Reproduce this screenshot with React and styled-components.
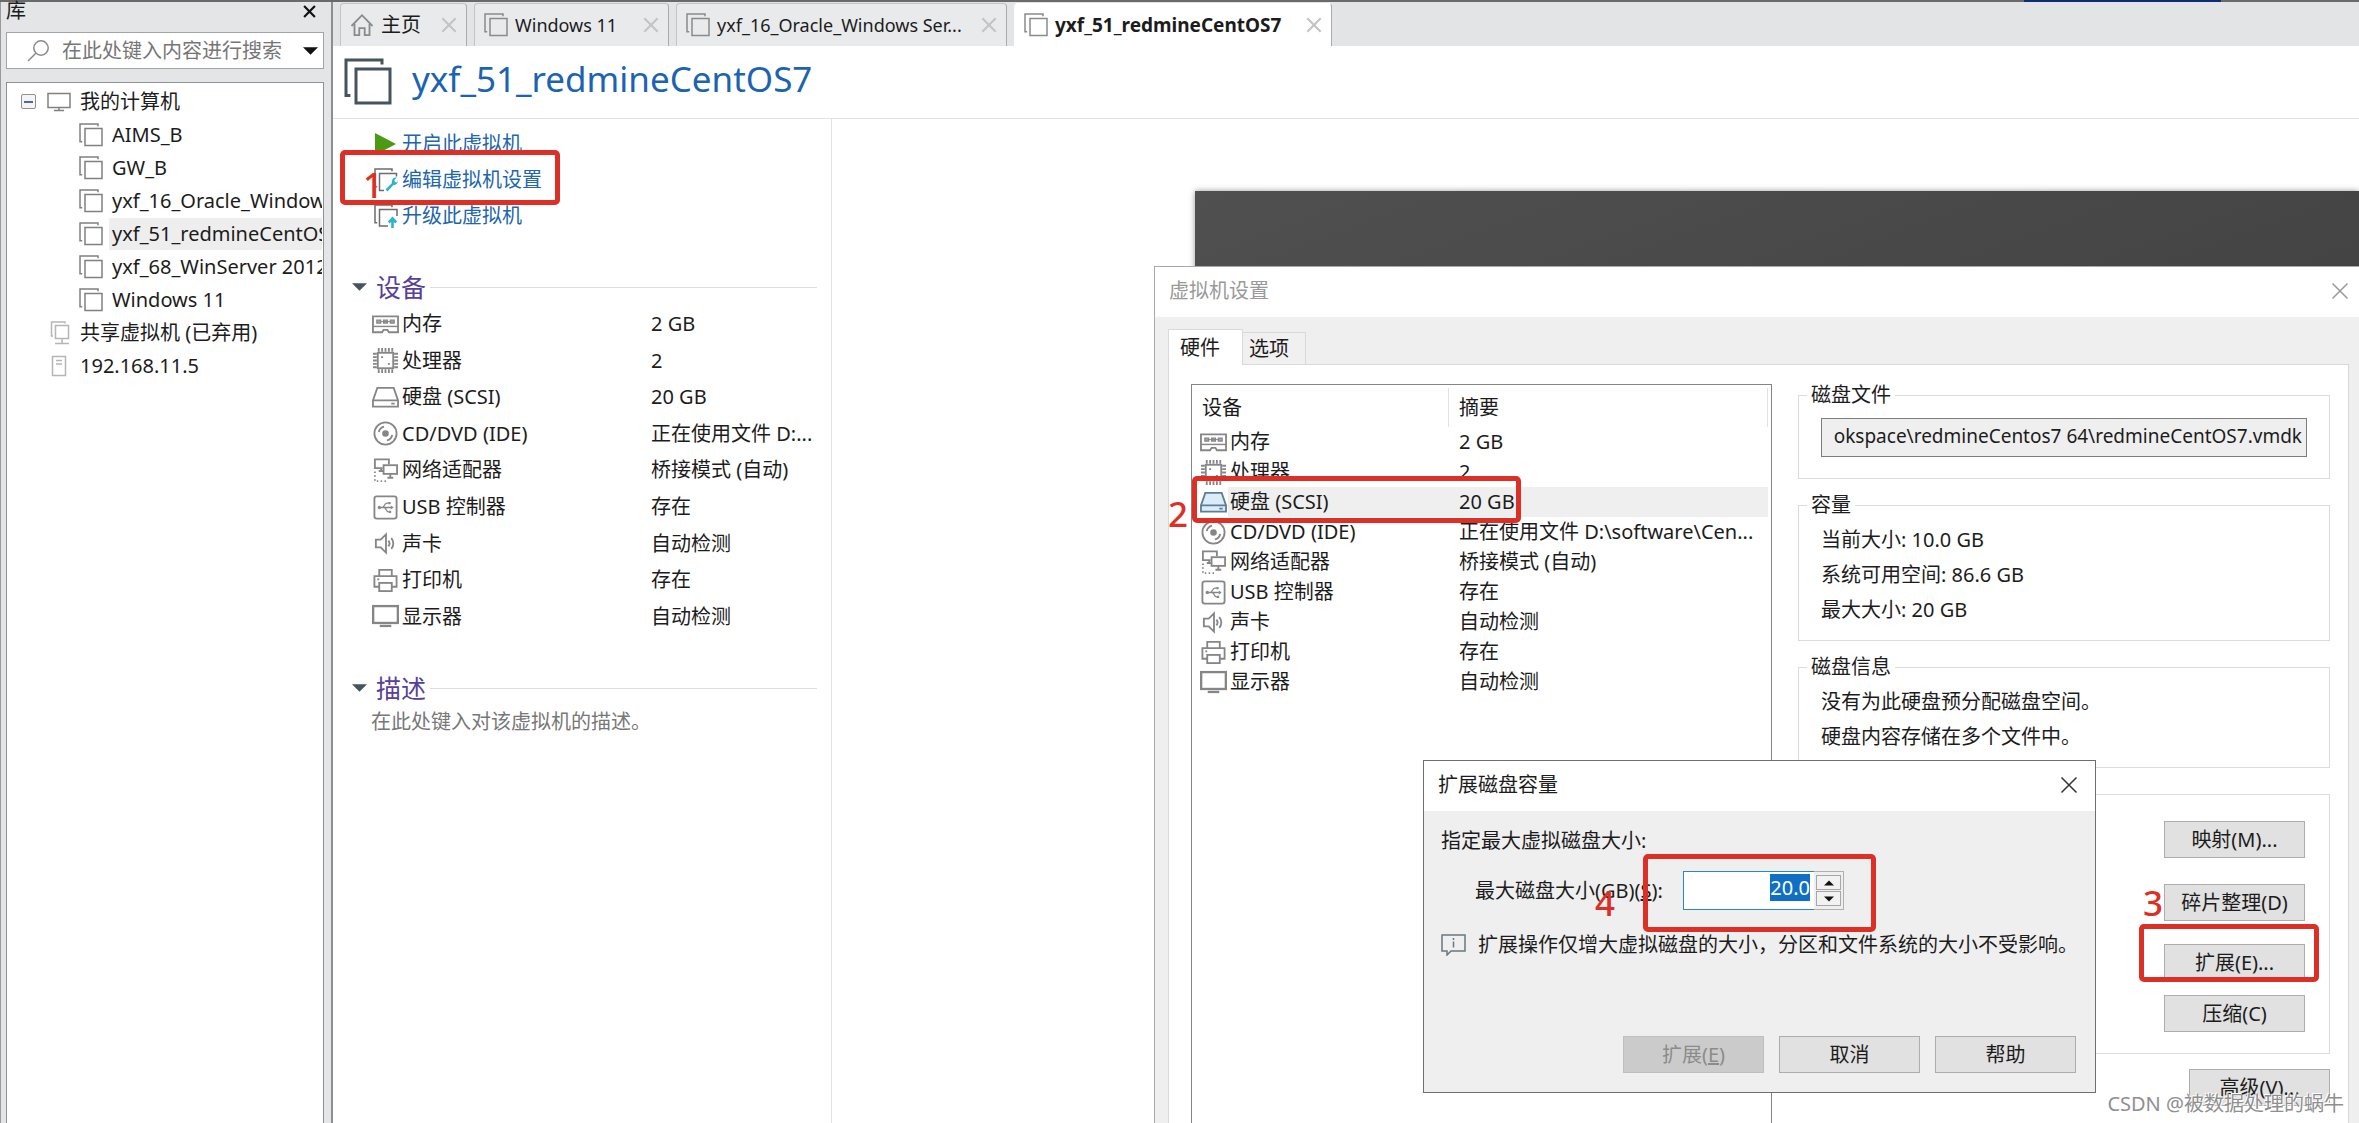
import React, { useEffect, useRef } from 'react';
import styled, { createGlobalStyle } from 'styled-components';

const GlobalStyle = createGlobalStyle`
  * {
    box-sizing: border-box;
  }

  body {
    margin: 0;
    background: #fff;
    color: #1c1c1c;
    font-family: "Noto Sans", "Noto Sans CJK SC", sans-serif;
    font-size: 20px;
    line-height: 30px;
  }

  button, input {
    font: inherit;
    color: inherit;
    border-radius: 0;
  }

  svg {
    display: block;
    flex: none;
  }
`;

/* ---------- icons ---------- */

const Icon = ({ size = 24, width, height, box = '0 0 24 24', color = '#808080', weight = 1.5, children }) => (
  <svg
    width={width || size}
    height={height || size}
    viewBox={box}
    fill="none"
    stroke={color}
    strokeWidth={weight}
    aria-hidden="true"
  >
    {children}
  </svg>
);

const VmIcon = props => (
  <Icon {...props}>
    <rect x="6" y="5.5" width="17" height="17" />
    <path d="M19 3.2V1H1v17.8h2.2" />
  </Icon>
);

const HomeIcon = () => (
  <Icon color="#8a8a8a" weight={1.8}>
    <path d="M1.5 13 12 2.2 22.500 13" />
    <path d="M4.500 11v11.200h4.800v-7h5.400v7h4.800V11" />
  </Icon>
);

const CloseIcon = ({ size = 18, color = '#c4c4c4', weight = 2.4 }) => (
  <Icon size={size} box="0 0 18 18" color={color} weight={weight}>
    <path d="M1.500 1.500l15 15M16.500 1.500l-15 15" />
  </Icon>
);

const SearchIcon = () => (
  <Icon color="#8a8a8a">
    <circle cx="15" cy="9" r="7.200" />
    <path d="M9.800 14.200 2 22" />
  </Icon>
);

const ComputerIcon = () => (
  <Icon>
    <rect x="1" y="3.500" width="22" height="14" />
    <path d="M12 17.500V20M7 20.500h10" />
  </Icon>
);

const SharedIcon = () => (
  <Icon color="#b5b5b5">
    <rect x="8.500" y="4.500" width="13" height="13" />
    <path d="M18 2.500V1H4.500v14H6M15 17.500V22M8 22.500h14" />
  </Icon>
);

const HostIcon = () => (
  <Icon color="#b5b5b5">
    <rect x="5.500" y="2.500" width="13" height="19" />
    <path d="M9 6.500h6M9 10h6" />
  </Icon>
);

const PlayIcon = () => (
  <Icon>
    <path d="M1 1v22l21-11z" fill="#4b9a14" stroke="none" />
  </Icon>
);

const EditVmIcon = () => (
  <Icon color="#6c6c6c">
    <path d="M10 22.500H5.500v-17h17v3M18 3.200V1H1v17.800h2.200" />
    <path
      d="M11.500 21.500l6.500-6.500a4.300 4.300 0 0 1 5-5.500l-2.600 2.600.5 2 2 .5L24 12.500a4.300 4.300 0 0 1-4.600 4.500L13.500 23.500z"
      fill="#2bb3cf"
      stroke="none"
    />
  </Icon>
);

const UpgradeVmIcon = () => (
  <Icon color="#6c6c6c">
    <path d="M14 22H5.500V5.500H23V12M18 3.200V1H1v17.800h2.200" />
    <path d="M18.500 24V15.500M14.800 18.500l3.700-4 3.700 4" stroke="#2bb3cf" strokeWidth="2.600" />
  </Icon>
);

const deviceArt = {
  memory: (
    <>
      <path d="M1 5.500h26v16.500H17.500l-1.500-2.500h-4l-1.500 2.500H1z" />
      <path d="M1 16h26" strokeWidth="1.500" />
      <path d="M5 9.500h4v3H5zM12 9.500h4v3h-4zM19 9.500h4v3h-4z" fill="#a8a8a8" strokeWidth="1.300" />
      <path d="M8 11h12" strokeWidth="1" />
    </>
  ),
  cpu: (
    <>
      <rect x="6" y="6" width="16" height="16" />
      <path d="M7 1v4M10.500 1v4M14 1v4M17.500 1v4M21 1v4M7 23v4M10.500 23v4M14 23v4M17.500 23v4M21 23v4" />
      <path d="M1 7h4M1 10.500h4M1 14h4M1 17.500h4M1 21h4M23 7h4M23 10.500h4M23 14h4M23 17.500h4M23 21h4" />
      <path d="M9.500 10.500h2M16.500 17.500h2" strokeWidth="2" />
    </>
  ),
  disk: (
    <>
      <path d="M5.500 4h17L27 17v6.500H1V17z" />
      <path d="M1 17h26M20 20.300h3.500" />
    </>
  ),
  disc: (
    <>
      <circle cx="14" cy="14" r="11.500" />
      <circle cx="14" cy="14" r="2.500" fill="#868686" />
      <path d="M7 12.500a7.500 7.500 0 0 1 5.500-5.700M21 15.500a7.500 7.500 0 0 1-5.500 5.700" />
    </>
  ),
  network: (
    <>
      <path d="M11 11.500H3v-9h14.500v5" />
      <rect x="12" y="8.500" width="14" height="9" />
      <path d="M9.500 11.500v3M7 14.500h5M19 17.500v4M16 21.500h6" />
      <path d="M3 15v10h14" strokeDasharray="1.500 2.500" />
    </>
  ),
  usb: (
    <>
      <rect x="2.500" y="2.500" width="23" height="23" rx="2.500" />
      <path d="M7 14h14M10.500 14c2.500 0 2-4.500 5-4.500h2M12.500 14c2.500 0 2 4.500 4.500 4.500h1" strokeWidth="1.300" />
      <path d="M5.800 14a1.800 1.800 0 1 0 3.600 0 1.800 1.800 0 1 0-3.600 0M19.500 12l3 2-3 2zM17 8.300h2.400v2.400H17zM17.500 17.300h2.400v2.400h-2.400z" fill="#8a8a8a" stroke="none" />
    </>
  ),
  sound: (
    <>
      <path d="M4 10h5l5.500-5.500v19L9 18H4z" />
      <path d="M17 11c1.500 1.800 1.500 4.200 0 6M20 8.500c2.800 3.200 2.800 7.800 0 11" />
    </>
  ),
  printer: (
    <>
      <path d="M7.500 9V3h13v6M7.500 20.500h-5V9.500h23v11h-5" />
      <rect x="7.500" y="16.500" width="13" height="8.500" />
      <path d="M5.500 12.800h2" />
    </>
  ),
  display: (
    <>
      <rect x="1.200" y="3.200" width="25.600" height="17.500" strokeWidth="2.400" />
      <path d="M8 23.800h12" strokeWidth="2.400" />
    </>
  )
};

const DeviceIcon = ({ name, active }) => (
  <Icon size={27} box="0 0 28 28" color={active ? '#5b7f98' : '#868686'} weight={1.9}>
    {active && <path d="M5.500 4h17L27 17v6.500H1V17z" fill="#dcecf6" stroke="none" />}
    {deviceArt[name]}
  </Icon>
);

const Caret = ({ width = 15, height = 8, color = '#45555c', up }) => (
  <svg width={width} height={height} viewBox="0 0 16 8" aria-hidden="true">
    <path d={up ? 'M0 8h16L8 0z' : 'M0 0h16L8 8z'} fill={color} />
  </svg>
);

/* ---------- shell ---------- */

const Page = styled.div`
  position: relative;
  display: flex;
  flex-direction: column;
  height: 100vh;
  overflow: hidden;
`;

const TopEdge = styled.div`
  display: flex;
  justify-content: flex-end;
  flex: none;
  height: 2px;
  padding-right: 138px;
  background: #6a6a6a;

  &::after {
    content: '';
    width: 197px;
    background: #0b2f70;
  }
`;

const Workspace = styled.div`
  display: flex;
  flex: 1;
  min-height: 0;
`;

const IconButton = styled.button`
  display: flex;
  align-items: center;
  justify-content: center;
  flex: none;
  padding: 0;
  border: 0;
  background: none;
`;

/* ---------- library ---------- */

const Sidebar = styled.aside`
  display: flex;
  flex-direction: column;
  flex: none;
  width: 333px;
  padding: 0 7px 0 5px;
  border-left: 1px solid #9a9a9a;
  border-right: 2px solid #8b8f92;
  background: #e3e5e7;
`;

const SidebarHeader = styled.div`
  display: flex;
  align-items: center;
  justify-content: space-between;
  height: 18px;
  margin-bottom: 12px;
  padding-right: 8px;
`;

const SearchBox = styled.label`
  display: flex;
  align-items: center;
  flex: none;
  height: 37px;
  margin-bottom: 13px;
  padding: 0 5px 0 19px;
  border: 1px solid #a2a5a8;
  background: #fff;
`;

const SearchInput = styled.input`
  flex: 1;
  min-width: 0;
  margin-left: 12px;
  padding: 0;
  border: 0;
  outline: 0;
  background: none;

  &::placeholder {
    color: #767676;
    opacity: 1;
  }
`;

const Tree = styled.ul`
  flex: 1;
  margin: 0;
  padding: 2px 1px 0 0;
  border: 1px solid #8f9295;
  border-bottom: 0;
  background: #fff;
  list-style: none;
  overflow: hidden;
`;

const TreeRow = styled.li`
  display: flex;
  align-items: center;
  height: 33px;
  padding-left: ${({ $indent }) => $indent}px;
`;

const TreeLabel = styled.span`
  flex: 1;
  min-width: 0;
  margin-left: 6px;
  padding-left: 3px;
  line-height: 32px;
  white-space: nowrap;
  overflow: hidden;
  background: ${({ $selected }) => ($selected ? '#eeeeee' : 'transparent')};
`;

const Toggle = styled.button`
  width: 15px;
  height: 15px;
  margin-right: 11px;
  padding: 5px 2px;
  border: 1px solid #919191;
  border-radius: 2px;
  background: #f4f4f4;

  &::after {
    content: '';
    display: block;
    height: 2px;
    background: #4a6aa5;
  }
`;

/* ---------- main area ---------- */

const Main = styled.main`
  display: flex;
  flex-direction: column;
  flex: 1;
  min-width: 0;
`;

const TabStrip = styled.div`
  display: flex;
  gap: 7px;
  flex: none;
  height: 44px;
  padding: 1px 0 0 7px;
  background: #e3e4e6;
`;

const Tab = styled.div`
  display: flex;
  align-items: center;
  width: ${({ $width }) => $width}px;
  padding: 0 9px;
  border: 1px solid ${({ $active }) => ($active ? '#fff' : '#c2c4c6')};
  border-right-color: #a9abad;
  border-bottom: 0;
  border-radius: 4px 4px 0 0;
  background: ${({ $active }) => ($active ? '#fff' : '#e9eaec')};
`;

const TabLabel = styled.button`
  flex: 1;
  min-width: 0;
  margin-left: 7px;
  padding: 0;
  border: 0;
  background: none;
  font-size: ${({ $latin, $active }) => ($active ? 19 : $latin ? 18 : 20)}px;
  font-weight: ${({ $active }) => ($active ? 700 : 400)};
  text-align: left;
  white-space: nowrap;
`;

const VmHeader = styled.header`
  display: flex;
  align-items: center;
  gap: 20px;
  flex: none;
  height: 73px;
  padding-left: 11px;
  border-bottom: 1px solid #e2e2e2;
`;

const VmTitle = styled.h1`
  margin: 0;
  padding-bottom: 6px;
  color: #1c63b0;
  font-size: 35px;
  font-weight: 400;
  line-height: 48px;
`;

const Content = styled.div`
  display: flex;
  flex: 1;
  min-height: 0;
`;

const Summary = styled.section`
  position: relative;
  flex: none;
  width: 499px;
  padding-top: 7px;
  border-right: 1px solid #e2e2e2;
`;

const Actions = styled.nav`
  display: flex;
  flex-direction: column;
  align-items: flex-start;
  padding-left: 41px;
`;

const ActionLink = styled.a`
  display: flex;
  align-items: center;
  gap: 4px;
  height: 36px;
  color: #2166ad;
  text-decoration: none;
`;

const SectionTitle = styled.h2`
  display: flex;
  align-items: center;
  gap: 9px;
  height: 34px;
  margin: 36px 14px 2px 19px;
  color: #56409a;
  font-size: 25px;
  font-weight: 400;

  &::after {
    content: '';
    flex: 1;
    height: 1px;
    margin-left: -5px;
    background: #dedede;
  }
`;

const SummaryTable = styled.table`
  width: 445px;
  height: 329px;
  margin-left: 39px;
  border-collapse: collapse;
  table-layout: fixed;

  th, td {
    padding: 0;
    font-weight: 400;
    text-align: left;
    white-space: nowrap;
  }

  th {
    width: 279px;
  }
`;

const DeviceName = styled.span`
  display: flex;
  align-items: center;
  gap: 3px;
`;

const Description = styled.p`
  margin: 0 0 0 38px;
  color: #777;
`;

const Console = styled.section`
  flex: 1;
  padding: 72px 0 0 363px;
`;

const Screen = styled.div`
  height: 100%;
  background: linear-gradient(160deg, #505050, #3c3c3c 60%);
  box-shadow: 0 0 6px #999;
`;

/* ---------- windows ---------- */

const TitleBar = styled.div`
  display: flex;
  align-items: center;
  justify-content: space-between;
  flex: none;
  height: 50px;
  padding: 0 ${({ $right }) => $right}px 2px 14px;
  background: #fff;
  color: ${({ $dim }) => ($dim ? '#999' : '#1c1c1c')};
`;

const SettingsWindow = styled.section`
  position: absolute;
  top: 266px;
  right: 0;
  bottom: 0;
  left: 1154px;
  display: flex;
  flex-direction: column;
  border: solid #a8a8a8;
  border-width: 1px 0 0 1px;
  background: #efefef;
`;

const SettingsTabs = styled.div`
  display: flex;
  align-items: flex-end;
  flex: none;
  height: 47px;
  padding-left: 13px;
`;

const SettingsTab = styled.button`
  z-index: 1;
  width: ${({ $active }) => ($active ? 75 : 63)}px;
  height: ${({ $active }) => ($active ? 36 : 32)}px;
  margin-bottom: ${({ $active }) => ($active ? -1 : 0)}px;
  padding: 0 0 0 ${({ $active }) => ($active ? 11 : 6)}px;
  border: 1px solid #d9d9d9;
  border-bottom: 0;
  border-left-width: ${({ $active }) => ($active ? 1 : 0)}px;
  background: ${({ $active }) => ($active ? '#fff' : '#f0f0f0')};
  text-align: left;
`;

const SettingsPanel = styled.div`
  display: flex;
  align-items: stretch;
  gap: 26px;
  flex: 1;
  min-height: 0;
  margin: 0 10px 0 13px;
  padding: 19px 18px 0 22px;
  border: 1px solid #d9d9d9;
  border-bottom: 0;
  background: #fff;
`;

const DeviceList = styled.div`
  flex: 1;
  border: 1px solid #858585;
  border-bottom: 0;
`;

const DeviceTable = styled.table`
  width: 100%;
  border-collapse: collapse;
  table-layout: fixed;

  th, td {
    height: 30px;
    padding: 0 0 0 8px;
    font-weight: 400;
    text-align: left;
    white-space: nowrap;
  }

  thead th {
    height: 42px;
    padding: 4px 10px 0;
    background: linear-gradient(#e2e2e2, #e2e2e2) right 3px top 3px / 1px 39px no-repeat;
  }

  thead th:first-child {
    width: 257px;
    background-position: right 0 top 3px;
  }

  td {
    padding-left: 10px;
  }
`;

const DeviceRow = styled.tr`
  background: ${({ $selected }) =>
    $selected ? 'linear-gradient(#efefef, #efefef) 36px 0 / calc(100% - 39px) 100% no-repeat' : 'none'};
`;

const Details = styled.div`
  flex: none;
  width: 532px;
  margin-top: -1px;
`;

const Group = styled.fieldset`
  min-width: 0;
  margin: 0 0 14px;
  padding: 5px 22px 13px;
  border: 1px solid #dcdcdc;
  line-height: 35px;

  legend {
    margin-left: -14px;
    padding: 0 4px;
    line-height: 24px;
  }

  p {
    margin: 0;
  }
`;

const PathInput = styled.input`
  display: block;
  width: 100%;
  height: 39px;
  margin: 6px 0 8px;
  padding: 0 4px 4px;
  border: 1px solid #7d7d7d;
  outline: 0;
  background: #efefef;
  font-size: 19px;
  text-align: right;
`;

const Utilities = styled.div`
  position: relative;
  display: flex;
  flex-direction: column;
  align-items: flex-end;
  margin-top: 26px;
  padding: 0 24px 21px;
  border: 1px solid #dcdcdc;
`;

const PushButton = styled.button`
  flex: none;
  width: 141px;
  height: 37px;
  margin-top: ${({ $above = 0 }) => $above}px;
  padding: 0;
  border: 1px solid #adadad;
  background: #e1e1e1;

  &:disabled {
    border-color: #bfbfbf;
    background: #cbcbcb;
    color: #8b8b8b;
  }
`;

const Footer = styled.div`
  display: flex;
  justify-content: flex-end;
  margin-top: 15px;
`;

const ExpandWindow = styled.section`
  position: absolute;
  top: 760px;
  left: 1423px;
  width: 673px;
  border: 1px solid #6f6f6f;
  background: #efefef;
`;

const ExpandBody = styled.div`
  padding: 15px 19px 19px 17px;

  p {
    margin: 0;
  }
`;

const SizeRow = styled.div`
  display: flex;
  align-items: center;
  margin: 15px 0 20px 34px;

  label {
    width: 208px;
    white-space: nowrap;
  }
`;

const Spinner = styled.div`
  display: flex;
  width: 161px;
  height: 39px;
  border: 1px solid #b0b0b0;
  border-left: 0;
`;

const SizeInput = styled.input`
  width: 131px;
  height: 39px;
  margin-top: -1px;
  padding: 0 4px 6px;
  border: 1px solid #2b88c8;
  border-right: 0;
  outline: 0;
  background: #fff;
  text-align: right;

  &::selection {
    background: #0f6fc5;
    color: #fff;
  }
`;

const SpinButtons = styled.div`
  display: flex;
  flex-direction: column;
  gap: 1px;
  padding: 3px 2px;
`;

const SpinButton = styled(IconButton)`
  width: 25px;
  height: 15px;
  border: 1px solid #a6a6a6;
  background: #f2f2f2;
`;

const InfoRow = styled.div`
  display: flex;
  align-items: center;
  gap: 12px;
  white-space: nowrap;
`;

const ExpandButtons = styled.div`
  display: flex;
  justify-content: flex-end;
  gap: 15px;
  margin-top: 76px;
`;

/* ---------- step marks ---------- */

const Mark = styled.span`
  position: absolute;
  z-index: 2;
  top: ${({ $top }) => $top}px;
  left: ${({ $left }) => $left}px;
  width: ${({ $width }) => $width}px;
  height: ${({ $height }) => $height}px;
  border: 5px solid #dc3026;
  border-radius: 5px;
  pointer-events: none;
`;

const Step = styled.span`
  position: absolute;
  z-index: 2;
  top: ${({ $top }) => $top}px;
  left: ${({ $left }) => $left}px;
  color: #dc3026;
  font-size: 35px;
  font-weight: 500;
  line-height: 36px;
  pointer-events: none;
`;

const Watermark = styled.div`
  position: absolute;
  z-index: 3;
  right: 15px;
  bottom: 4px;
  color: #8f8f8f;
  text-shadow: 1px 1px 0 #fff, -1px -1px 0 #fff;
`;

/* ---------- data ---------- */

const machines = [
  'AIMS_B',
  'GW_B',
  'yxf_16_Oracle_Windows Server',
  'yxf_51_redmineCentOS7',
  'yxf_68_WinServer 2012',
  'Windows 11'
];

const tabs = [
  { label: '主页', width: 127, home: true },
  { label: 'Windows 11', width: 195 },
  { label: 'yxf_16_Oracle_Windows Ser...', width: 331 },
  { label: 'yxf_51_redmineCentOS7', width: 318, active: true }
];

const devices = [
  { icon: 'memory', name: '内存', value: '2 GB' },
  { icon: 'cpu', name: '处理器', value: '2' },
  { icon: 'disk', name: '硬盘 (SCSI)', value: '20 GB', selected: true },
  { icon: 'disc', name: 'CD/DVD (IDE)', value: '正在使用文件 D:...', full: '正在使用文件 D:\\software\\Cen...' },
  { icon: 'network', name: '网络适配器', value: '桥接模式 (自动)' },
  { icon: 'usb', name: 'USB 控制器', value: '存在' },
  { icon: 'sound', name: '声卡', value: '自动检测' },
  { icon: 'printer', name: '打印机', value: '存在' },
  { icon: 'display', name: '显示器', value: '自动检测' }
];

const Library = () => (
  <Sidebar>
    <SidebarHeader>
      库
      <IconButton aria-label="关闭">
        <CloseIcon size={13} color="#111" weight={3} />
      </IconButton>
    </SidebarHeader>
    <SearchBox>
      <SearchIcon />
      <SearchInput placeholder="在此处键入内容进行搜索" aria-label="搜索" />
      <IconButton aria-label="展开">
        <Caret color="#111" />
      </IconButton>
    </SearchBox>
    <Tree>
      <TreeRow $indent={14}>
        <Toggle aria-label="折叠" />
        <ComputerIcon />
        <TreeLabel>我的计算机</TreeLabel>
      </TreeRow>
      {machines.map(name => (
        <TreeRow key={name} $indent={72}>
          <VmIcon />
          <TreeLabel $selected={name === 'yxf_51_redmineCentOS7'}>{name}</TreeLabel>
        </TreeRow>
      ))}
      <TreeRow $indent={40}>
        <SharedIcon />
        <TreeLabel>共享虚拟机 (已弃用)</TreeLabel>
      </TreeRow>
      <TreeRow $indent={40}>
        <HostIcon />
        <TreeLabel>192.168.11.5</TreeLabel>
      </TreeRow>
    </Tree>
  </Sidebar>
);

const VmSummary = () => (
  <Summary>
    <Actions>
      <ActionLink href="#power"><PlayIcon />开启此虚拟机</ActionLink>
      <ActionLink href="#edit"><EditVmIcon />编辑虚拟机设置</ActionLink>
      <ActionLink href="#upgrade"><UpgradeVmIcon />升级此虚拟机</ActionLink>
    </Actions>
    <SectionTitle><Caret />设备</SectionTitle>
    <SummaryTable>
      <tbody>
        {devices.map(({ icon, name, value }) => (
          <tr key={name}>
            <th scope="row"><DeviceName><DeviceIcon name={icon} />{name}</DeviceName></th>
            <td>{value}</td>
          </tr>
        ))}
      </tbody>
    </SummaryTable>
    <SectionTitle><Caret />描述</SectionTitle>
    <Description>在此处键入对该虚拟机的描述。</Description>
    <Mark $top={31} $left={7} $width={220} $height={55} />
    <Step $top={48} $left={30}>1</Step>
  </Summary>
);

const Settings = () => (
  <SettingsWindow>
    <TitleBar $dim $right={10}>
      虚拟机设置
      <IconButton aria-label="关闭"><CloseIcon color="#999" weight={1.5} /></IconButton>
    </TitleBar>
    <SettingsTabs>
      <SettingsTab $active>硬件</SettingsTab>
      <SettingsTab>选项</SettingsTab>
    </SettingsTabs>
    <SettingsPanel>
      <DeviceList>
        <DeviceTable>
          <thead>
            <tr><th scope="col">设备</th><th scope="col">摘要</th></tr>
          </thead>
          <tbody>
            {devices.map(({ icon, name, value, full, selected }) => (
              <DeviceRow key={name} $selected={selected}>
                <th scope="row">
                  <DeviceName><DeviceIcon name={icon} active={selected} />{name}</DeviceName>
                </th>
                <td>{full || value}</td>
              </DeviceRow>
            ))}
          </tbody>
        </DeviceTable>
      </DeviceList>
      <Details>
        <Group>
          <legend>磁盘文件</legend>
          <PathInput
            readOnly
            aria-label="磁盘文件"
            value="okspace\redmineCentos7 64\redmineCentOS7.vmdk"
          />
        </Group>
        <Group>
          <legend>容量</legend>
          <p>当前大小: 10.0 GB</p>
          <p>系统可用空间: 86.6 GB</p>
          <p>最大大小: 20 GB</p>
        </Group>
        <Group>
          <legend>磁盘信息</legend>
          <p>没有为此硬盘预分配磁盘空间。</p>
          <p>硬盘内容存储在多个文件中。</p>
        </Group>
        <Utilities>
          <PushButton $above={26}>映射(M)...</PushButton>
          <PushButton $above={26}>碎片整理(D)</PushButton>
          <PushButton $above={23}>扩展(E)...</PushButton>
          <PushButton $above={14}>压缩(C)</PushButton>
          <Mark $top={129} $left={340} $width={180} $height={58} />
          <Step $top={90} $left={344}>3</Step>
        </Utilities>
        <Footer>
          <PushButton>高级(V)...</PushButton>
        </Footer>
      </Details>
    </SettingsPanel>
    <Mark $top={209} $left={37} $width={329} $height={47} />
    <Step $top={229} $left={13}>2</Step>
  </SettingsWindow>
);

const ExpandDisk = () => {
  const size = useRef(null);

  // the size is ready to be typed over as soon as the window opens
  useEffect(() => {
    size.current.focus();
    size.current.select();
  }, []);

  return (
    <ExpandWindow>
      <TitleBar $right={17}>
        扩展磁盘容量
        <IconButton aria-label="关闭"><CloseIcon color="#333" weight={1.5} /></IconButton>
      </TitleBar>
      <ExpandBody>
        <p>指定最大虚拟磁盘大小:</p>
        <SizeRow>
          <label htmlFor="disk-size">最大磁盘大小(GB)(<u>S</u>):</label>
          <Spinner>
            <SizeInput id="disk-size" ref={size} defaultValue="20.0" />
            <SpinButtons>
              <SpinButton aria-label="增加"><Caret up width={10} height={6} color="#111" /></SpinButton>
              <SpinButton aria-label="减少"><Caret width={10} height={6} color="#111" /></SpinButton>
            </SpinButtons>
          </Spinner>
        </SizeRow>
        <InfoRow>
          <Icon width={25} height={22} box="0 0 25 22" color="#6a7880">
            <path d="M1 1h23v16H10l-4 4v-4H1z" />
            <path d="M12.500 7.500v6M12.500 4v2" />
          </Icon>
          扩展操作仅增大虚拟磁盘的大小，分区和文件系统的大小不受影响。
        </InfoRow>
        <ExpandButtons>
          <PushButton disabled>扩展(<u>E</u>)</PushButton>
          <PushButton>取消</PushButton>
          <PushButton>帮助</PushButton>
        </ExpandButtons>
      </ExpandBody>
      <Mark $top={93} $left={219} $width={233} $height={78} />
      <Step $top={124} $left={171}>4</Step>
    </ExpandWindow>
  );
};

const App = () => (
  <Page>
    <GlobalStyle />
    <TopEdge />
    <Workspace>
      <Library />
      <Main>
        <TabStrip>
          {tabs.map(({ label, width, home, active }) => (
            <Tab key={label} $width={width} $active={active}>
              {home ? <HomeIcon /> : <VmIcon color="#8a8a8a" />}
              <TabLabel $active={active} $latin={!home}>{label}</TabLabel>
              <IconButton aria-label="关闭"><CloseIcon size={16} /></IconButton>
            </Tab>
          ))}
        </TabStrip>
        <VmHeader>
          <VmIcon size={48} color="#46555d" />
          <VmTitle>yxf_51_redmineCentOS7</VmTitle>
        </VmHeader>
        <Content>
          <VmSummary />
          <Console><Screen /></Console>
        </Content>
      </Main>
    </Workspace>
    <Settings />
    <ExpandDisk />
    <Watermark>CSDN @被数据处理的蜗牛</Watermark>
  </Page>
);

export default App;
